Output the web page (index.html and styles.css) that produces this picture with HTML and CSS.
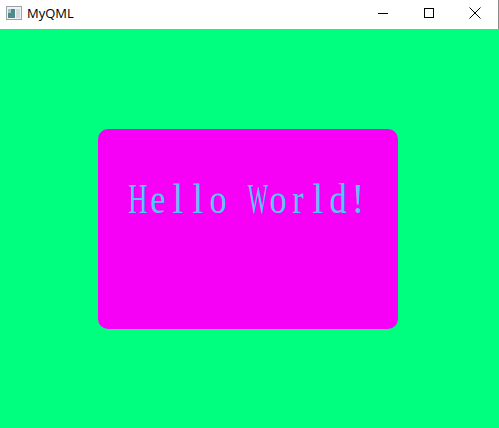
FILE: index.html
```html
<!DOCTYPE html>
<html>

<head>
  <meta charset="utf-8">
  <title>MyQML</title>
  <link rel="stylesheet" href="styles.css">
</head>

<body>
  <div class="titlebar">
    <svg class="appIcon" width="16" height="14" viewBox="0 0 16 14">
      <rect x="0.5" y="0.5" width="15" height="13" fill="#f2f4f4" stroke="#9aa2a8" />
      <rect x="2" y="3" width="7" height="9" fill="#4f8a8a" />
      <rect x="2" y="3" width="3" height="4" fill="#9fc4c4" />
      <rect x="10" y="3" width="4" height="9" fill="#d3d9dc" />
    </svg>
    <span class="appName">MyQML</span>
    <div class="winButtons">
      <div class="winButton">
        <svg width="12" height="12" viewBox="0 0 12 12">
          <path d="M1 6.5H11" stroke="#000" fill="none" />
        </svg>
      </div>
      <div class="winButton">
        <svg width="12" height="12" viewBox="0 0 12 12">
          <rect x="1.5" y="1.5" width="9" height="9" stroke="#000" fill="none" />
        </svg>
      </div>
      <div class="winButton">
        <svg width="12" height="12" viewBox="0 0 12 12">
          <path d="M0.5 0.5L11.5 11.5M11.5 0.5L0.5 11.5" stroke="#000" fill="none" />
        </svg>
      </div>
    </div>
  </div>
  <div class="content">
    <div class="card">
      <div class="hello">
        <span class="ch chH">H</span><span class="ch">e</span><span class="ch chL">l</span><span class="ch chL">l</span><span class="ch">o</span><span class="ch">&nbsp;</span><span class="ch chW">W</span><span class="ch">o</span><span class="ch">r</span><span class="ch chL">l</span><span class="ch">d</span><span class="ch chL">!</span>
      </div>
    </div>
  </div>
</body>

</html>
```

FILE: styles.css
```css
html,
body {
  margin: 0;
  height: 100%;
}

body {
  display: flex;
  flex-direction: column;
  font-family: "Open Sans", "Noto Sans", sans-serif;
  overflow: hidden;
}

.titlebar {
  height: 29px;
  box-sizing: border-box;
  padding-bottom: 3px;
  flex-shrink: 0;
  display: flex;
  align-items: center;
  background-color: #fff;
  border-right: 1px solid #8c8c8c;
}

.appIcon {
  margin-left: 6px;
  margin-right: 5px;
}

.appName {
  font-size: 13px;
  color: #000;
}

.winButtons {
  margin-left: auto;
  display: flex;
}

.winButton {
  width: 46px;
  height: 26px;
  display: flex;
  align-items: center;
  justify-content: center;
}

.content {
  flex-grow: 1;
  background-color: #00ff7f;
  padding-top: 100px;
  padding-left: 98px;
}

.card {
  width: 300px;
  height: 200px;
  box-sizing: border-box;
  border-radius: 10px;
  background-color: #f600f6;
  display: flex;
  justify-content: center;
  padding-top: 43px;
}

.hello {
  display: flex;
  flex-shrink: 0;
  height: 54px;
  font-family: "Liberation Serif", serif;
  font-size: 43px;
  line-height: 54px;
  color: #50c8ff;
}

/* litery w rownych odstepach, jak w czcionce o stalej szerokosci */
.ch {
  width: 20px;
  display: flex;
  justify-content: center;
  transform: scaleX(0.8);
}

.chH {
  transform: scaleX(0.62);
}

.chW {
  transform: scaleX(0.5);
}

.chL {
  transform: scaleX(0.9);
}
```
